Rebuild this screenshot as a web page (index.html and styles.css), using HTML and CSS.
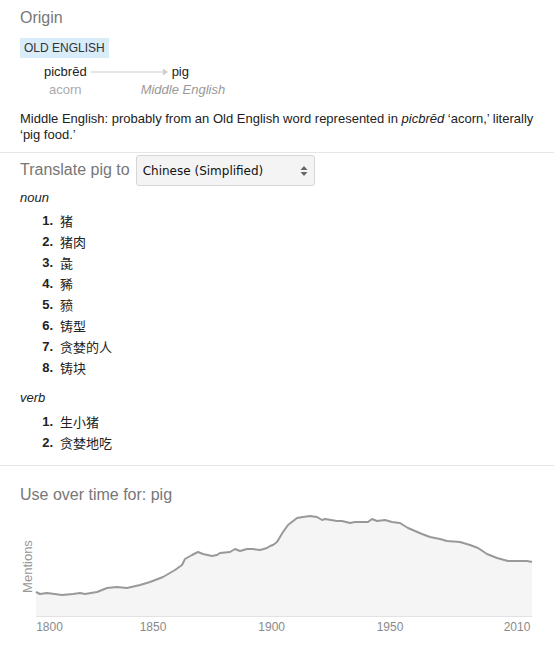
FILE: index.html
```html
<!DOCTYPE html>
<html>
<head>
<meta charset="utf-8">
<link rel="stylesheet" href="styles.css">
</head>
<body>
<section class="sec origin">
  <div class="title">Origin</div>
  <div class="badge-row"><span class="badge">OLD ENGLISH</span></div>
  <div class="etym">
    <div class="src">
      <div class="word">picbrēd</div>
      <div class="gloss">acorn</div>
    </div>
    <div class="dst">
      <div class="dst-top">
        <svg class="arrow" width="78" height="18" viewBox="0 0 78 18"><line x1="0" y1="9" x2="72" y2="9" stroke="#dedede" stroke-width="1.5"/><polygon points="72,5.5 77,9 72,12.5" fill="#cfcfcf"/></svg>
        <span class="word">pig</span>
      </div>
      <div class="lang">Middle English</div>
    </div>
  </div>
  <p class="desc">Middle English: probably from an Old English word represented in <i>picbrēd</i> ‘acorn,’ literally ‘pig food.’</p>
</section>
<section class="sec translate">
  <div class="tr-row">
    <span class="tr-label">Translate pig to</span>
    <div class="select">
      <span class="select-text">Chinese (Simplified)</span>
      <svg class="select-arrows" width="8" height="12" viewBox="0 0 8 12"><polygon points="4,1 7.5,5 0.5,5" fill="#666"/><polygon points="0.5,7 7.5,7 4,11" fill="#666"/></svg>
    </div>
  </div>
  <div class="pos">noun</div>
  <ol class="defs">
    <li><span class="num">1.</span><span class="zh">猪</span></li>
    <li><span class="num">2.</span><span class="zh">猪肉</span></li>
    <li><span class="num">3.</span><span class="zh">彘</span></li>
    <li><span class="num">4.</span><span class="zh">豨</span></li>
    <li><span class="num">5.</span><span class="zh">豮</span></li>
    <li><span class="num">6.</span><span class="zh">铸型</span></li>
    <li><span class="num">7.</span><span class="zh">贪婪的人</span></li>
    <li><span class="num">8.</span><span class="zh">铸块</span></li>
  </ol>
  <div class="pos verb">verb</div>
  <ol class="defs defs-verb">
    <li><span class="num">1.</span><span class="zh">生小猪</span></li>
    <li><span class="num">2.</span><span class="zh">贪婪地吃</span></li>
  </ol>
</section>
<section class="usage">
  <div class="title">Use over time for: pig</div>
  <svg class="chart" width="514" height="130" viewBox="0 0 514 130">
    <polygon fill="#f5f5f5" points="16,82 20,84 27,83 42,85 53,84 60,83 65,84 77,82 87,78 97,77 107,78 120,75 130,72 143,67 155,60 162,55 165,49 172,45 178,42 183,44 192,46 197,45 200,43 210,42 215,39 220,41 227,39 233,39 240,40 247,38 250,36 253,35 257,32 263,22 268,15 277,8 283,7 290,6 297,7 302,10 305,9 317,11 322,11 330,13 335,12 348,12 352,9 357,11 365,10 372,12 380,13 388,18 395,21 402,24 410,27 420,29 427,31 440,32 450,35 458,38 467,44 477,48 488,51 507,51 512,52 512,106 16,106"/>
    <line x1="16" y1="106.5" x2="512" y2="106.5" stroke="#e2e2e2" stroke-width="1"/>
    <polyline fill="none" stroke="#999" stroke-width="2" stroke-linejoin="round" points="16,82 20,84 27,83 42,85 53,84 60,83 65,84 77,82 87,78 97,77 107,78 120,75 130,72 143,67 155,60 162,55 165,49 172,45 178,42 183,44 192,46 197,45 200,43 210,42 215,39 220,41 227,39 233,39 240,40 247,38 250,36 253,35 257,32 263,22 268,15 277,8 283,7 290,6 297,7 302,10 305,9 317,11 322,11 330,13 335,12 348,12 352,9 357,11 365,10 372,12 380,13 388,18 395,21 402,24 410,27 420,29 427,31 440,32 450,35 458,38 467,44 477,48 488,51 507,51 512,52"/>
    <text class="axis-y" x="0" y="0" transform="translate(12,56.5) rotate(-90)" text-anchor="middle">Mentions</text>
    <text class="axis-x" x="29.5" y="121" text-anchor="middle">1800</text>
    <text class="axis-x" x="133" y="121" text-anchor="middle">1850</text>
    <text class="axis-x" x="251.7" y="121" text-anchor="middle">1900</text>
    <text class="axis-x" x="370" y="121" text-anchor="middle">1950</text>
    <text class="axis-x" x="497" y="121" text-anchor="middle">2010</text>
  </svg>
</section>
</body>
</html>
```
FILE: styles.css
```css
html, body {
  margin: 0;
  padding: 0;
  background: #fff;
}
body {
  font-family: "Liberation Sans", Arial, "Noto Sans CJK SC", sans-serif;
  font-size: 13px;
  color: #222;
}
.sec {
  padding: 0 20px;
  border-bottom: 1px solid #e6e6e6;
}
.origin {
  padding-top: 8px;
  padding-bottom: 9px;
}
.title {
  font-size: 16px;
  line-height: 20px;
  color: #777;
}
.badge-row {
  margin-top: 10px;
  display: flex;
}
.badge {
  display: block;
  height: 20px;
  line-height: 20px;
  padding: 0 4px;
  font-size: 12px;
  background: #d8ecfa;
  color: #333;
}
.etym {
  display: flex;
  margin-top: 5px;
  padding-left: 24px;
  line-height: 18px;
}
.src {
  display: flex;
  flex-direction: column;
  align-items: center;
}
.word {
  color: #222;
}
.gloss {
  color: #aaa;
}
.dst {
  margin-left: 4px;
}
.dst-top {
  display: flex;
  align-items: center;
  height: 18px;
}
.arrow {
  display: block;
  margin-right: 3px;
}
.lang {
  padding-left: 50px;
  color: #999;
  font-style: italic;
}
.desc {
  margin: 12px -6px 0 0;
  line-height: 16px;
}
.translate {
  padding-top: 2px;
  padding-bottom: 12px;
}
.tr-row {
  display: flex;
  align-items: center;
  height: 31px;
}
.tr-label {
  font-size: 16px;
  color: #777;
  margin-right: 6px;
  position: relative;
  top: -1px;
}
.select {
  box-sizing: border-box;
  width: 179px;
  height: 31px;
  border: 1px solid #d6d6d6;
  border-radius: 3px;
  background: #f4f4f4;
  display: flex;
  align-items: center;
  justify-content: space-between;
  padding: 0 6px 0 6px;
}
.select-text {
  font-family: "DejaVu Sans", "Liberation Sans", sans-serif;
  font-size: 12px;
  color: #111;
}
.select-arrows {
  display: block;
}
.pos {
  margin-top: 4px;
  font-style: italic;
  line-height: 16px;
}
.pos.verb {
  margin-top: 12px;
}
.defs {
  list-style: none;
  margin: 4px 0 0;
  padding: 0;
}
.defs-verb {
  margin-top: 5px;
}
.defs li {
  display: flex;
  line-height: 21px;
  height: 21px;
}
.num {
  width: 33px;
  text-align: right;
  font-weight: bold;
  margin-right: 7px;
}
.zh {
  font-family: "Noto Sans CJK SC", sans-serif;
  font-size: 13px;
  color: #222;
}
.usage {
  padding: 19px 20px 0;
}
.chart {
  display: block;
  margin-top: 5px;
}
.axis-x {
  font-family: "Liberation Sans", Arial, sans-serif;
  font-size: 12px;
  fill: #8a8a8a;
}
.axis-y {
  font-family: "Liberation Sans", Arial, sans-serif;
  font-size: 13px;
  fill: #999;
}
```
